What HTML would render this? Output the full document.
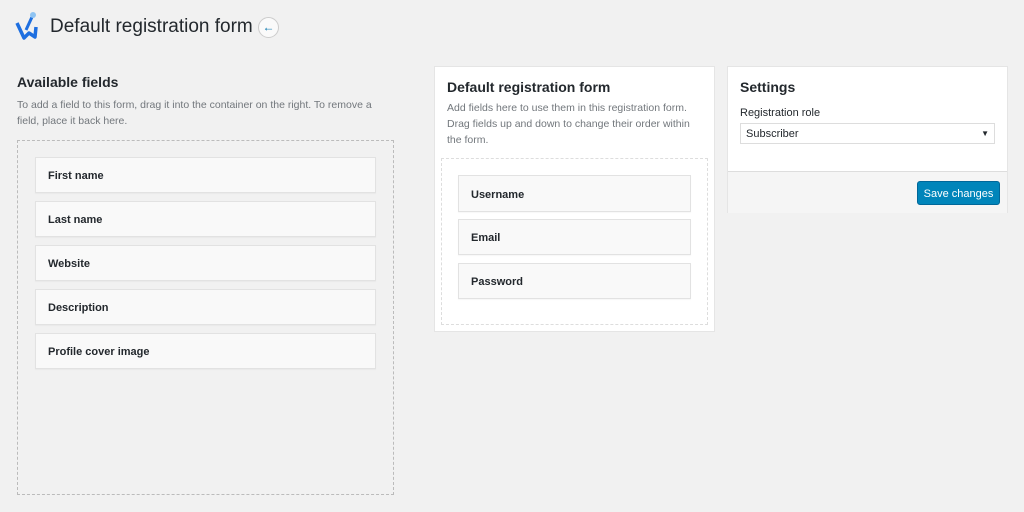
<!DOCTYPE html>
<html><head><style>
body{margin:0;width:1024px;height:512px;background:#f1f1f1;font-family:"Liberation Sans",sans-serif;color:#23282d;position:relative;overflow:hidden}
.a{position:absolute}
.field{position:absolute;background:#f9f9f9;border:1px solid #e2e2e2;box-shadow:0 1px 1px rgba(0,0,0,.04);font-size:11px;font-weight:bold;box-sizing:border-box;padding-left:12px;padding-top:2px;display:flex;align-items:center}
.desc{color:#72777c;font-size:10.5px;line-height:16px}
</style></head><body>
<svg class="a" style="left:14px;top:9px" width="28" height="32" viewBox="0 0 28 32">
<path d="M3 14 L10 29 L15 24 L21 28 L22 18" fill="none" stroke="#1e6fe0" stroke-width="3.5" stroke-linejoin="round"/>
<path d="M12 21 L18 8" stroke="#1e6fe0" stroke-width="3"/>
<circle cx="19" cy="6" r="3" fill="#8fc4f2"/>
</svg>
<div class="a" style="left:50px;top:16px;font-size:19px">Default registration form</div>
<div class="a" style="left:258px;top:17px;width:19px;height:19px;border:1px solid #ccc;border-radius:50%;background:#fafafa;color:#0073aa;font-size:12px;text-align:center;line-height:19px">←</div>

<div class="a" style="left:17px;top:74px;font-size:14px;font-weight:bold">Available fields</div>
<div class="a desc" style="left:17px;top:97px;width:375px">To add a field to this form, drag it into the container on the right. To remove a field, place it back here.</div>
<div class="a" style="left:17px;top:140px;width:375px;height:353px;border:1px dashed #bbb"></div>
<div class="field" style="left:35px;top:157px;width:341px;height:36px">First name</div>
<div class="field" style="left:35px;top:201px;width:341px;height:36px">Last name</div>
<div class="field" style="left:35px;top:245px;width:341px;height:36px">Website</div>
<div class="field" style="left:35px;top:289px;width:341px;height:36px">Description</div>
<div class="field" style="left:35px;top:333px;width:341px;height:36px">Profile cover image</div>

<div class="a" style="left:434px;top:66px;width:281px;height:266px;background:#fff;border:1px solid #e5e5e5;box-sizing:border-box"></div>
<div class="a" style="left:447px;top:79px;font-size:14px;font-weight:bold">Default registration form</div>
<div class="a desc" style="left:447px;top:100px;width:255px">Add fields here to use them in this registration form. Drag fields up and down to change their order within the form.</div>
<div class="a" style="left:441px;top:158px;width:265px;height:165px;border:1px dashed #ddd"></div>
<div class="field" style="left:458px;top:175px;width:233px;height:37px">Username</div>
<div class="field" style="left:458px;top:219px;width:233px;height:36px">Email</div>
<div class="field" style="left:458px;top:263px;width:233px;height:36px">Password</div>

<div class="a" style="left:727px;top:66px;width:281px;height:147px;background:#fff;border:1px solid #e5e5e5;box-sizing:border-box"></div>
<div class="a" style="left:728px;top:171px;width:279px;height:41px;background:#f5f5f5;border-top:1px solid #ddd"></div>
<div class="a" style="left:740px;top:79px;font-size:14px;font-weight:bold">Settings</div>
<div class="a" style="left:740px;top:107px;font-size:11px">Registration role</div>
<div class="a" style="left:740px;top:123px;width:255px;height:21px;border:1px solid #ddd;box-sizing:border-box;font-size:11px;padding:4px 5px;background:#fff">Subscriber<span style="float:right;font-size:8px;padding-top:1px">▼</span></div>
<div class="a" style="left:917px;top:181px;width:83px;height:24px;background:#0085ba;border:1px solid #006799;border-radius:3px;box-sizing:border-box;color:#fff;font-size:11px;text-align:center;line-height:24px">Save changes</div>
</body></html>
